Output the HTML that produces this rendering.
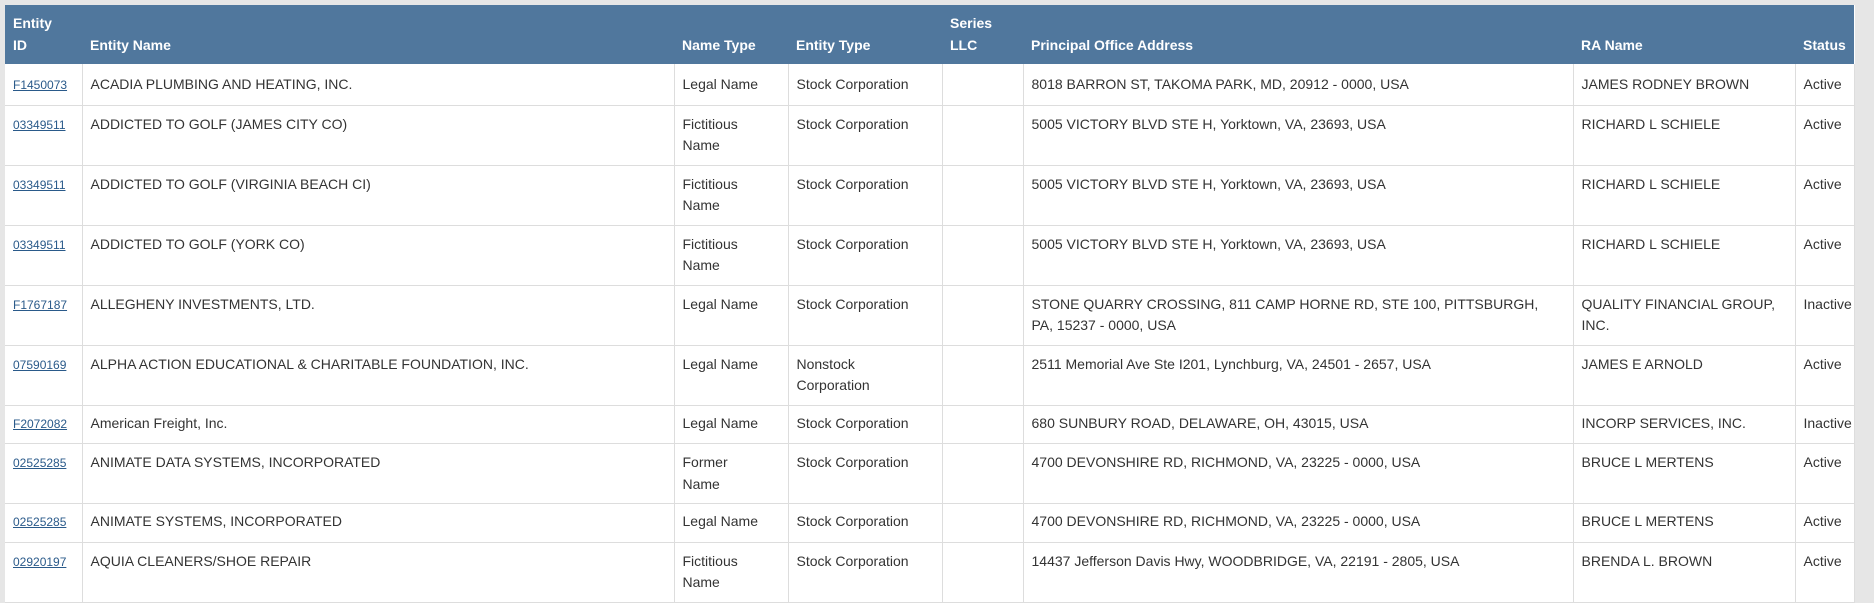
<!DOCTYPE html>
<html><head><meta charset="utf-8"><style>
html,body{margin:0;padding:0;background:#e6e6e6;width:1874px;height:601px;overflow:hidden}
table{position:absolute;left:5px;top:5px;width:1849px;border-collapse:collapse;background:#fff;font-family:"Liberation Sans",sans-serif;font-size:14px;color:#333;table-layout:fixed}
th{background:#50779d;color:#fff;font-weight:bold;text-align:left;vertical-align:bottom;padding:5px 8px 8px;line-height:22px;height:46px}
td{vertical-align:top;padding:8px 8px 8px;line-height:21.5px;border:1px solid #ddd;border-top:none}
tr.f td{padding-top:10px;padding-bottom:8px}
tr.s td{padding-top:7px;padding-bottom:8px}
tr td:first-child{border-left:none}
td a{color:#2a5a8a;text-decoration:underline;font-size:12px}
</style></head><body>
<table>
<colgroup><col style="width:77px"><col style="width:592px"><col style="width:114px"><col style="width:154px"><col style="width:81px"><col style="width:550px"><col style="width:222px"><col style="width:59px"></colgroup>
<tr><th>Entity<br>ID</th><th>Entity Name</th><th>Name Type</th><th>Entity Type</th><th>Series<br>LLC</th><th>Principal Office Address</th><th>RA Name</th><th>Status</th></tr>
<tr class="f"><td><a>F1450073</a></td><td>ACADIA PLUMBING AND HEATING, INC.</td><td>Legal Name</td><td>Stock Corporation</td><td></td><td>8018 BARRON ST, TAKOMA PARK, MD, 20912 - 0000, USA</td><td>JAMES RODNEY BROWN</td><td>Active</td></tr>
<tr><td><a>03349511</a></td><td>ADDICTED TO GOLF (JAMES CITY CO)</td><td>Fictitious<br>Name</td><td>Stock Corporation</td><td></td><td>5005 VICTORY BLVD STE H, Yorktown, VA, 23693, USA</td><td>RICHARD L SCHIELE</td><td>Active</td></tr>
<tr><td><a>03349511</a></td><td>ADDICTED TO GOLF (VIRGINIA BEACH CI)</td><td>Fictitious<br>Name</td><td>Stock Corporation</td><td></td><td>5005 VICTORY BLVD STE H, Yorktown, VA, 23693, USA</td><td>RICHARD L SCHIELE</td><td>Active</td></tr>
<tr><td><a>03349511</a></td><td>ADDICTED TO GOLF (YORK CO)</td><td>Fictitious<br>Name</td><td>Stock Corporation</td><td></td><td>5005 VICTORY BLVD STE H, Yorktown, VA, 23693, USA</td><td>RICHARD L SCHIELE</td><td>Active</td></tr>
<tr><td><a>F1767187</a></td><td>ALLEGHENY INVESTMENTS, LTD.</td><td>Legal Name</td><td>Stock Corporation</td><td></td><td>STONE QUARRY CROSSING, 811 CAMP HORNE RD, STE 100, PITTSBURGH,<br>PA, 15237 - 0000, USA</td><td>QUALITY FINANCIAL GROUP,<br>INC.</td><td>Inactive</td></tr>
<tr><td><a>07590169</a></td><td>ALPHA ACTION EDUCATIONAL &amp; CHARITABLE FOUNDATION, INC.</td><td>Legal Name</td><td>Nonstock<br>Corporation</td><td></td><td>2511 Memorial Ave Ste I201, Lynchburg, VA, 24501 - 2657, USA</td><td>JAMES E ARNOLD</td><td>Active</td></tr>
<tr class="s"><td><a>F2072082</a></td><td>American Freight, Inc.</td><td>Legal Name</td><td>Stock Corporation</td><td></td><td>680 SUNBURY ROAD, DELAWARE, OH, 43015, USA</td><td>INCORP SERVICES, INC.</td><td>Inactive</td></tr>
<tr><td><a>02525285</a></td><td>ANIMATE DATA SYSTEMS, INCORPORATED</td><td>Former<br>Name</td><td>Stock Corporation</td><td></td><td>4700 DEVONSHIRE RD, RICHMOND, VA, 23225 - 0000, USA</td><td>BRUCE L MERTENS</td><td>Active</td></tr>
<tr class="s"><td><a>02525285</a></td><td>ANIMATE SYSTEMS, INCORPORATED</td><td>Legal Name</td><td>Stock Corporation</td><td></td><td>4700 DEVONSHIRE RD, RICHMOND, VA, 23225 - 0000, USA</td><td>BRUCE L MERTENS</td><td>Active</td></tr>
<tr><td><a>02920197</a></td><td>AQUIA CLEANERS/SHOE REPAIR</td><td>Fictitious<br>Name</td><td>Stock Corporation</td><td></td><td>14437 Jefferson Davis Hwy, WOODBRIDGE, VA, 22191 - 2805, USA</td><td>BRENDA L. BROWN</td><td>Active</td></tr>
</table>
</body></html>
